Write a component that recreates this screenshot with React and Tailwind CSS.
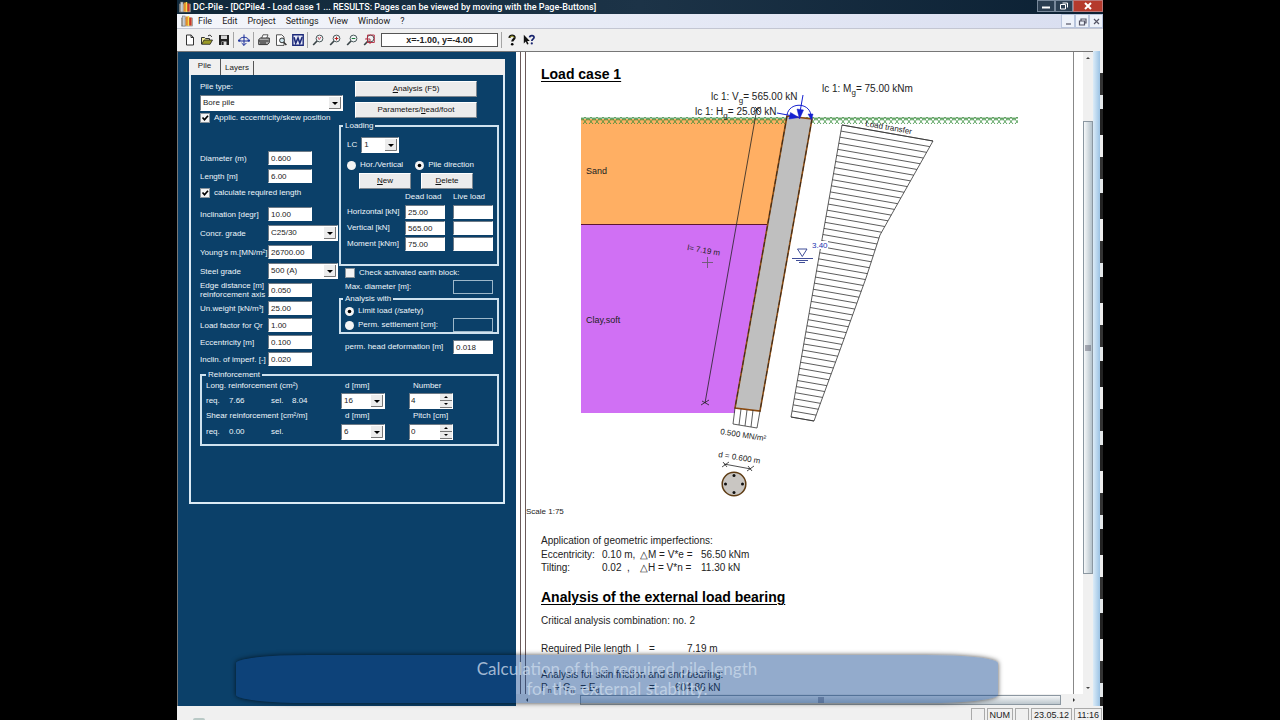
import React, { useId } from "react";

const field =
  "h-3.5 min-w-0 rounded-none border border-t-[#6d7a86] border-l-[#6d7a86] border-r-white border-b-white bg-white px-0.5 text-[8px] leading-3 text-[#222] outline-none";
const push =
  "h-4 border border-t-white border-l-white border-r-[#7d8790] border-b-[#7d8790] bg-[#ececec] text-[8px] leading-3 text-[#111] whitespace-nowrap";

function Combo({ value, className, id, label }) {
  return (
    <span className={"relative inline-flex shrink-0 h-4 " + className}>
      <select
        id={id}
        aria-label={label}
        defaultValue={value}
        className="h-4 w-full appearance-none rounded-none border border-t-[#6d7a86] border-l-[#6d7a86] border-r-white border-b-white bg-white pl-0.5 text-[8px] leading-3 text-[#222] outline-none"
      >
        <option>{value}</option>
      </select>
      <svg viewBox="0 0 12 12" className="pointer-events-none absolute right-0.5 top-0.5 size-3">
        <rect width="12" height="12" fill="#ececec" />
        <path d="M11.5 0v11.5H0" fill="none" stroke="#777" />
        <path d="M3 5h6L6 8z" fill="#000" />
      </svg>
    </span>
  );
}

function Spin({ value, label, id }) {
  return (
    <span className="flex h-4 w-11 border border-t-[#6d7a86] border-l-[#6d7a86] border-r-white border-b-white bg-white">
      <input id={id} aria-label={label} defaultValue={value} className="w-7 min-w-0 grow bg-white px-px text-[8px] text-[#222] outline-none" />
      <span className="flex w-3 flex-col">
        <button aria-label="Increase" className="flex h-[7px] items-center justify-center border-b border-[#777] bg-[#ececec]">
          <svg viewBox="0 0 6 4" className="h-1 w-1.5"><path d="M1 3h4L3 1z" /></svg>
        </button>
        <button aria-label="Decrease" className="flex h-[7px] items-center justify-center border-b border-[#777] bg-[#ececec]">
          <svg viewBox="0 0 6 4" className="h-1 w-1.5"><path d="M1 1h4L3 3z" /></svg>
        </button>
      </span>
    </span>
  );
}

function Row({ label, value, combo, h }) {
  const id = useId();
  return (
    <div className={"flex items-center " + h}>
      <label htmlFor={id} className="w-[68px] shrink-0 leading-[9px]">{label}</label>
      {combo ? <Combo id={id} value={value} className="w-[70px]" /> : <input id={id} defaultValue={value} className={field + " w-11"} />}
    </div>
  );
}

function Check({ label, on, h }) {
  return (
    <label className={"flex items-center gap-1 " + h}>
      <span className="relative flex size-[10px] shrink-0">
        <input type="checkbox" defaultChecked={on} className="peer size-[10px] appearance-none border border-[#8a949c] bg-[#f4f4f4]" />
        <svg viewBox="0 0 10 10" className="pointer-events-none absolute inset-0 hidden size-[10px] peer-checked:block">
          <path d="M2.5 4.5l2 2.2 3.5-4" fill="none" stroke="#000" strokeWidth="1.7" />
        </svg>
      </span>
      {label}
    </label>
  );
}

function Radio({ name, label, on }) {
  return (
    <label className="flex items-center gap-1">
      <span className="relative flex size-[9px] shrink-0">
        <input type="radio" name={name} defaultChecked={on} className="peer size-[9px] appearance-none rounded-full bg-[#f4f4f4]" />
        <svg viewBox="0 0 9 9" className="pointer-events-none absolute inset-0 hidden size-[9px] peer-checked:block">
          <circle cx="4.5" cy="4.5" r="1.8" />
        </svg>
      </span>
      {label}
    </label>
  );
}

function AppIcon() {
  return (
    <svg viewBox="0 0 12 12" className="size-3 shrink-0">
      <rect x="0.5" y="3" width="11" height="8" fill="#d8cfa4" stroke="#7b7b80" strokeWidth=".6" />
      <rect x="1.5" y="1" width="2.6" height="10" fill="#c9cdd4" stroke="#666" strokeWidth=".5" />
      <rect x="4.7" y="1.5" width="2.8" height="9" fill="#e58a2c" />
      <rect x="8" y="2.5" width="2.6" height="8" fill="#c7382e" />
      <rect x="6.8" y="1" width="1.4" height="10" fill="#f5df4c" />
    </svg>
  );
}

const glass = (
  <>
    <circle cx="7.5" cy="4.5" r="3.4" fill="#eef3f3" stroke="#4c5a5c" />
    <path d="M5 7L1.2 11" stroke="#3b4548" strokeWidth="1.7" />
  </>
);
const icons = {
  New: <path d="M2.5 1h4.6l2.4 2.4V11h-7zM7 1v2.5h2.5" fill="#fff" stroke="#333" />,
  Open: <><path d="M.5 10V3.5h3l1 1h4V6" fill="#f6ef9a" stroke="#333" /><path d="M.7 10.3L3 6h8.5l-2.4 4.3z" fill="#9a9a26" stroke="#222" strokeWidth=".8" /><path d="M7 2c2-1.6 3-.5 3.6.8" fill="none" stroke="#222" /></>,
  Save: <><path d="M1 1h10v10H1z" fill="#222" /><path d="M3 1.5h6V5H3z" fill="#d8d8d8" /><path d="M3.5 7.5h5V11h-5z" fill="#ddd" /><path d="M4 8h1.6v3H4z" fill="#222" /></>,
  "Pile system": <path d="M6 .5v11M3.600 9L6 11.400 8.400 9M1 7C1 2 11 2 11 7M1 7h10M-.2 5.400L1 7.600l1.600-2M9.400 5.600L11 7.600l1.200-2.200" fill="none" stroke="#1b2f9a" />,
  Print: <><path d="M3.5 4.5L5 .8h5L8.6 4.5" fill="#fff" stroke="#333" strokeWidth=".8" /><path d="M.7 5.500L2.500 4h8.800v4.500L9.500 10.600H.7z" fill="#aaa" stroke="#222" strokeWidth=".9" /><path d="M1 7h9.500M2 9h6" stroke="#222" /></>,
  Preview: <><path d="M1.5.8h5.3L9 3v8.400H1.500z" fill="#fff" stroke="#444" strokeWidth=".9" /><circle cx="7" cy="6.400" r="2.400" fill="#cfe6ee" stroke="#333" /><path d="M8.600 8.200l2.800 2.900" stroke="#333" strokeWidth="1.500" /></>,
  "Export to Word": <><path d="M.8.8h10.400v10.400H.8z" fill="#e6e9f6" stroke="#1d2a7a" strokeWidth="1.400" /><path d="M2 3.200l1.700 6L6 4l1.800 5.200L10.200 3" fill="none" stroke="#1d2a7a" strokeWidth="1.600" /></>,
  "Zoom window": <>{glass}<path d="M6 3l1.200 2.600L8.800 3" fill="none" stroke="#c44a5a" strokeWidth=".9" /></>,
  "Zoom in": <>{glass}<path d="M5.700 4.500h3.600M7.500 2.700v3.600" stroke="#b22" /></>,
  "Zoom out": <>{glass}<path d="M5.700 4.500h3.600" stroke="#1a7a3a" /></>,
  "Zoom all": <>{glass}<path d="M4.500 1h6.800v7.500H4.500zM2 5h5v5" fill="none" stroke="#b3263a" strokeWidth=".9" /></>,
  Help: <><path d="M3.600 4C3.400.6 9 .8 8.600 3.800 8.400 5.400 6.300 5.400 6.300 7.600" fill="none" stroke="#111" strokeWidth="2.200" /><path d="M4 3.800C4 1.600 8.200 1.600 8 3.800" fill="none" stroke="#e7e23a" strokeWidth=".7" /><circle cx="6.200" cy="10.200" r="1.300" /></>,
  "Context help": <><path d="M.8.8v8.600l2-1.800 1.300 3 1.500-.6-1.400-3h2.600z" fill="#111" /><path d="M6.600 3.400c.2-2.600 4.800-2.400 4.400.2-.3 1.600-2.200 1.600-2.200 3.400" fill="none" stroke="#17236e" strokeWidth="1.700" /><circle cx="8.800" cy="9.400" r="1.100" fill="#17236e" /></>,
};
function Tool({ name }) {
  return (
    <button aria-label={name} className="flex size-[17px] shrink-0 items-center justify-center">
      <svg viewBox="0 0 12 12" className="size-3">{icons[name]}</svg>
    </button>
  );
}
const Sep = () => <span className="mx-px h-4 w-px shrink-0 bg-[#a5a5a5]" />;

/* Geometry of the load-transfer diagram */
const right = [[933, 141], [880, 235], [866, 278], [840, 350], [826, 388], [814, 421]];
const rungs = Array.from({ length: 49 }, (_, i) => {
  const t = i / 48;
  const x = 842 - 51 * t;
  const y = 125 + 292 * t;
  const k = 0.175;
  for (let j = 0; j < right.length - 1; j++) {
    const [ax, ay] = right[j];
    const [bx, by] = right[j + 1];
    const fa = ay - y - k * (ax - x);
    const fb = by - y - k * (bx - x);
    if (fa <= 0.5 && fb >= -0.5) {
      const s = Math.min(1, Math.max(0, fa / (fa - fb)));
      return [x, y, ax + (bx - ax) * s, ay + (by - ay) * s];
    }
  }
  return [x, y, 814, 421];
});

function Figure() {
  return (
    <svg viewBox="526 82 546 436" width="546" height="436" className="shrink-0" fontFamily="Liberation Sans, Arial, sans-serif" fill="#222">
      <defs>
        <pattern id="grass" width="6" height="7" patternUnits="userSpaceOnUse" y="117">
          <path d="M0 1l5 6M3 0l3 3.500M6 1L1 7M3 0L0 3.500" fill="none" stroke="#2f8a35" strokeWidth=".8" />
        </pattern>
      </defs>
      <path d="M581 119H787L768 224H581z" fill="#ffaf63" />
      <path d="M581 224H768L735 408V413H581z" fill="#d070f4" />
      <path d="M581 224.500H768" stroke="#5c1630" />
      <rect x="581" y="117" width="437" height="7" fill="url(#grass)" />
      <path d="M581 118H1018" stroke="#5a9a5a" strokeWidth=".8" />
      <path d="M787 116L812 119 760 411 735 408z" fill="#bfbfbf" stroke="#8a4a10" strokeWidth="1.600" />
      <path d="M787 116L735 408M812 119L760 411" fill="none" stroke="#222" strokeWidth=".8" strokeDasharray="5 3" />
      <path d="M735 408L733 424 757 428 760 411M741 409l-2 16M747 410l-2 16M753 410l-2 17" fill="none" stroke="#333" strokeWidth=".8" />
      <path d="M757 108L705 403M753 112l8-5M755 107l5 5M701 405l8-5M702 401l7 4" stroke="#222" strokeWidth=".8" />
      <path d="M707.500 257v11M702 262.500h11" stroke="#6b5a70" strokeWidth=".9" />
      <g fill="none" stroke="#333" strokeWidth=".8">
        <path d="M791 417L842 125 933 141 880 235 866 278 840 350 826 388 814 421z" />
        {rungs.map(([a, b, c, d], i) => <path key={i} d={`M${a} ${b}L${c} ${d}`} />)}
      </g>
      <g stroke="#1420d0" strokeWidth="1" fill="none">
        <path d="M787 115C789 102 809 102 811 115M803 95L800 112M777 113L793 116" />
        <path d="M799.500 119L797 109l6.500 1zM799 117.500L789 119l1.500-6.500zM811.500 120l-3.500-6h5z" fill="#1420d0" strokeWidth=".5" />
      </g>
      <path d="M797.500 249h9.500l-4.700 7.500zM792 258.500h21M796 260.500h12M799 262.500h6" fill="none" stroke="#2a3a8c" strokeWidth=".9" />
      <rect x="811" y="241" width="17" height="8" fill="#fff" />
      <text x="812" y="248" fontSize="8" fill="#2233b0">3.40</text>
      <g fontSize="10">
        <text x="822" y="92">lc 1: M<tspan dy="3" fontSize="8">g</tspan><tspan dy="-3">= 75.00 kNm</tspan></text>
        <text x="711" y="100">lc 1: V<tspan dy="3" fontSize="8">g</tspan><tspan dy="-3">= 565.00 kN</tspan></text>
        <text x="695" y="115">lc 1: H<tspan dy="3" fontSize="8">g</tspan><tspan dy="-3">= 25.00 kN</tspan></text>
      </g>
      <text x="586" y="174" fontSize="9">Sand</text>
      <text x="586" y="323" fontSize="9">Clay,soft</text>
      <g fontSize="8">
        <text transform="translate(865 126) rotate(10)">Load transfer</text>
        <text transform="translate(687 250) rotate(10)">l= 7.19 m</text>
        <text transform="translate(720 434) rotate(9)">0.500 MN/m²</text>
        <text transform="translate(718 457) rotate(9)">d = 0.600 m</text>
        <text x="526" y="514">Scale 1:75</text>
      </g>
      <path d="M724 464L751 469M722 467l7-5M723 462l4 5M747 471l7-5M748 466l4 5" stroke="#222" strokeWidth=".8" />
      <circle cx="734" cy="484" r="11.800" fill="#c9c6c2" stroke="#5e3c14" strokeWidth="1.500" />
      <g fill="#111"><circle cx="734" cy="475.500" r="1.500" /><circle cx="734" cy="492.500" r="1.500" /><circle cx="725.500" cy="484" r="1.500" /><circle cx="742.500" cy="484" r="1.500" /></g>
    </svg>
  );
}

function LoadRow({ label, dead }) {
  return (
    <>
      <span>{label}</span>
      <input aria-label={label + " dead load"} defaultValue={dead} className={field + " w-10"} />
      <input aria-label={label + " live load"} className={field + " w-10"} />
    </>
  );
}

function PilePanel() {
  return (
    <aside className="w-[338px] shrink-0 bg-[#0b4069] px-[11px] pt-[7px] text-[8px] leading-3 whitespace-nowrap text-[#eef6fb]">
      <div className="flex h-4 items-end bg-[#f0f0f0] text-[#222]" role="tablist">
        <button role="tab" aria-selected="true" className="h-4 w-8 border-r border-[#555] pb-0.5">Pile</button>
        <button role="tab" aria-selected="false" className="h-3.5 border-r border-[#555] px-1">Layers</button>
      </div>
      <div className="border-2 border-t-0 border-[#dcebf5] pt-1.5 pr-1 pb-14 pl-[9px]">
        <div className="grid grid-cols-[138px_160px] gap-x-px">
          <div>
            <label htmlFor="ptype" className="block h-3.5">Pile type:</label>
            <Combo id="ptype" value="Bore pile" className="w-[143px] align-top" />
            <Check label="Applic. eccentricity/skew position" on h="h-3.5" />
            <div className="h-6" />
            <Row label="Diameter (m)" value="0.600" h="h-[18px]" />
            <Row label="Length [m]" value="6.00" h="h-[18px]" />
            <Check label="calculate required length" on h="h-4" />
            <div className="h-1" />
            <Row label="Inclination [degr]" value="10.00" h="h-[18px]" />
            <Row label="Concr. grade" value="C25/30" combo h="h-5" />
            <Row label="Young's m.[MN/m²]" value="26700.00" h="h-[18px]" />
            <Row label="Steel grade" value="500 (A)" combo h="h-5" />
            <Row label={<>Edge distance [m]<br />reinforcement axis</>} value="0.050" h="h-[18px]" />
            <Row label="Un.weight [kN/m³]" value="25.00" h="h-[18px]" />
            <Row label="Load factor for Qr" value="1.00" h="h-4" />
            <Row label="Eccentricity [m]" value="0.100" h="h-[18px]" />
            <Row label="Inclin. of imperf. [-]" value="0.020" h="h-4" />
          </div>
          <div>
            <div className="flex flex-col gap-[5px] pl-4">
              <button className={push + " w-[122px]"}><u>A</u>nalysis (F5)</button>
              <button className={push + " w-[122px]"}>Parameters/<u>h</u>ead/foot</button>
            </div>
            <fieldset className="mt-[3px] min-w-0 border-2 border-[#cfe2ef] px-1.5 pb-3">
              <legend className="-ml-1 px-0.5 leading-[10px]">Loading</legend>
              <div className="mt-1.5 flex items-center gap-1">
                <label htmlFor="lc">LC</label>
                <Combo id="lc" value="1" className="w-[38px]" />
              </div>
              <div className="mt-1 flex h-4 items-center gap-3">
                <Radio name="dir" label="Hor./Vertical" />
                <Radio name="dir" label="Pile direction" on />
              </div>
              <div className="flex gap-2.5 pl-3">
                <button className={push + " w-[52px]"}><u>N</u>ew</button>
                <button className={push + " w-[52px]"}><u>D</u>elete</button>
              </div>
              <div className="mt-px grid auto-rows-[16px] grid-cols-[58px_48px_40px] grid-rows-[14px] items-center">
                <span />
                <span>Dead load</span>
                <span>Live load</span>
                <LoadRow label="Horizontal [kN]" dead="25.00" />
                <LoadRow label="Vertical [kN]" dead="565.00" />
                <LoadRow label="Moment [kNm]" dead="75.00" />
              </div>
            </fieldset>
            <div className="px-1.5">
              <Check label="Check activated earth block:" h="h-3.5" />
              <div className="flex h-3.5 items-center justify-between">
                <label htmlFor="maxd">Max. diameter [m]:</label>
                <input id="maxd" disabled className="h-3.5 w-10 border border-[#9db8ca] bg-[#0b4069]" />
              </div>
            </div>
            <fieldset className="min-w-0 border-2 border-[#cfe2ef] px-1">
              <legend className="-ml-0.5 px-0.5 leading-[10px]">Analysis with</legend>
              <div className="flex h-3.5 items-center"><Radio name="mode" label="Limit load (/safety)" on /></div>
              <div className="flex h-3.5 items-center justify-between">
                <Radio name="mode" label="Perm. settlement [cm]:" />
                <input aria-label="Permissible settlement" disabled className="h-3.5 w-10 border border-[#9db8ca] bg-[#0b4069]" />
              </div>
            </fieldset>
            <div className="mt-1.5 flex items-center justify-between px-1.5">
              <label htmlFor="phd">perm. head deformation [m]</label>
              <input id="phd" defaultValue="0.018" className={field + " w-10"} />
            </div>
          </div>
        </div>
        <fieldset className="mt-[3px] min-w-0 border-2 border-[#cfe2ef] px-1 pb-1">
          <legend className="px-0.5 leading-[10px]">Reinforcement</legend>
          <div className="grid grid-cols-[23px_42px_21px_49px_68px_44px] grid-rows-[12px_17px_14px_17px] items-center">
            <span className="col-span-4">Long. reinforcement (cm²)</span>
            <label htmlFor="d1" className="pl-1">d [mm]</label>
            <label htmlFor="num" className="pl-1">Number</label>
            <span>req.</span><span>7.66</span><span>sel.</span><span>8.04</span>
            <Combo id="d1" value="16" className="w-11" />
            <Spin id="num" value="4" />
            <span className="col-span-4">Shear reinforcement [cm²/m]</span>
            <label htmlFor="d2" className="pl-1">d [mm]</label>
            <label htmlFor="pitch" className="pl-1">Pitch [cm]</label>
            <span>req.</span><span>0.00</span><span>sel.</span><span />
            <Combo id="d2" value="6" className="w-11" />
            <Spin id="pitch" value="0" />
          </div>
        </fieldset>
      </div>
    </aside>
  );
}

function Report() {
  return (
    <article className="min-w-0 grow overflow-hidden border-r border-l border-[#6b5a5a] border-r-[#888] bg-white text-[10px] leading-[14px] text-[#222] whitespace-pre">
      <h2 className="h-[30px] pt-3 pl-[15px] text-[14px] leading-5 font-bold text-black underline underline-offset-2">Load case 1</h2>
      <Figure />
      <div className="pt-4 pl-[15px]">
        <p>Application of geometric imperfections:</p>
        <div className="grid grid-cols-[61px_38px_61px_1fr] leading-[13px]">
          <span>Eccentricity:</span><span>0.10 m,</span><span>△M = V*e =</span><span>56.50 kNm</span>
          <span>Tilting:</span><span>0.02  ,</span><span>△H = V*n =</span><span>11.30 kN</span>
        </div>
        <h2 className="mt-[13px] text-[14px] leading-5 font-bold text-black underline underline-offset-2">Analysis of the external load bearing</h2>
        <p className="mt-[7px]">Critical analysis combination: no. 2</p>
        <div className="mt-3.5 grid grid-cols-[108px_38px_1fr]"><span>Required Pile length  l</span><span>=</span><span>7.19 m</span></div>
        <p className="mt-3 leading-[13px]">Analysis for skin friction and end bearing:</p>
        <div className="grid grid-cols-[108px_26px_1fr] leading-[13px]">
          <span>P<sub className="text-[7px]">n</sub> + G<sub className="text-[7px]">n</sub>  = E<sub className="text-[7px]">d</sub></span><span>=</span><span>604.86 kN</span>
        </div>
      </div>
    </article>
  );
}

export default function App() {
  return (
    <div className="flex h-screen overflow-hidden bg-black px-[177px] font-['Liberation_Sans',Arial,sans-serif]">
      <div className="relative flex min-w-0 grow flex-col bg-[#f0f0f0]">
        <header className="flex h-3.5 shrink-0 items-center bg-linear-to-r from-[#10283a] via-[#1c3347] to-[#0b2033] pl-0.5">
          <AppIcon />
          <h1 className="grow pl-0.5 font-[Roboto,sans-serif] text-[9px] leading-3.5 font-medium whitespace-nowrap text-white">
            DC-Pile - [DCPile4 - Load case 1 ... RESULTS: Pages can be viewed by moving with the Page-Buttons]
          </h1>
          <div className="flex h-3 self-start">
            <button aria-label="Minimize" className="flex w-[18px] items-center justify-center border border-[#78889a] bg-[#2c3f52]">
              <svg viewBox="0 0 10 8" className="h-2 w-2.5"><path d="M1 4.500h8v2H1z" fill="#fff" /></svg>
            </button>
            <button aria-label="Restore" className="flex w-[18px] items-center justify-center border border-[#78889a] bg-[#2c3f52]">
              <svg viewBox="0 0 10 8" className="h-2 w-2.5" fill="none" stroke="#fff"><path d="M3.500 1h5v4.500M1.500 2.500h5v4.500h-5z" /></svg>
            </button>
            <button aria-label="Close" className="flex w-[30px] items-center justify-center border border-[#b77] bg-[#b53a2c]">
              <svg viewBox="0 0 10 8" className="h-2 w-2.5"><path d="M2 1l6 6M8 1L2 7" stroke="#fff" strokeWidth="2" /></svg>
            </button>
          </div>
        </header>
        <nav className="flex h-[15px] shrink-0 items-center border-b border-[#c3c6d2] bg-linear-to-r from-[#f4f6fb] to-[#d9def0] pl-1 font-[Roboto,sans-serif] text-[9px] leading-3 text-[#222]">
          <AppIcon />
          <div className="flex grow gap-2.5 pl-[5px]">
            {["File", "Edit", "Project", "Settings", "View", "Window", "?"].map((m) => <button key={m}>{m}</button>)}
          </div>
          <div className="flex">
            {["M3 8h5", "M4 5V3h5v4H8M2.500 5h5v4h-5z", "M3 3l5 5M8 3L3 8"].map((d, i) => (
              <button key={d} aria-label={["Minimize page", "Restore page", "Close page"][i]} className="flex size-3.5 items-center justify-center border border-[#b8c4dc] bg-[#eef2fa]">
                <svg viewBox="0 0 11 11" className="size-[11px]"><path d={d} fill="none" stroke="#556" strokeWidth="1.200" /></svg>
              </button>
            ))}
          </div>
        </nav>
        <div className="flex h-[22px] shrink-0 items-center pl-1">
          <Tool name="New" /><Tool name="Open" /><Tool name="Save" /><Sep />
          <Tool name="Pile system" /><Sep />
          <Tool name="Print" /><Tool name="Preview" /><Tool name="Export to Word" /><Sep />
          <Tool name="Zoom window" /><Tool name="Zoom in" /><Tool name="Zoom out" /><Tool name="Zoom all" />
          <input aria-label="Coordinates" readOnly value="x=-1.00, y=-4.00" className="mr-0.5 ml-1 h-3.5 w-[117px] border border-[#555] bg-white text-center text-[9px] font-bold text-[#222]" />
          <Sep /><Tool name="Help" /><Tool name="Context help" />
        </div>
        <div className="flex min-h-0 grow">
          <div className="flex min-w-0 grow border-t border-l border-[#777]">
            <PilePanel />
            <main className="flex min-w-0 grow flex-col bg-white">
              <div className="flex min-h-0 grow">
                <div className="ml-1 w-[5px] shrink-0 border-l border-[#6b5a5a]" />
                <Report />
                <div className="ml-[9px] flex w-2.5 shrink-0 flex-col items-center bg-[#f0f0f0]">
                  <svg viewBox="0 0 10 12" className="h-3 w-2.5"><path d="M3 7h4L5 5z" fill="#444" /></svg>
                  <div className="h-[57px]" />
                  <div className="flex min-h-0 w-2.5 grow-3 basis-0 items-center justify-center border border-[#8b97a1] bg-linear-to-r from-[#f6f8f9] to-[#b4c2cb]">
                    <svg viewBox="0 0 6 6" className="size-1.5"><path d="M0 1h6M0 3h6M0 5h6" stroke="#556" strokeWidth=".9" /></svg>
                  </div>
                  <div className="h-[108px]" />
                  <svg viewBox="0 0 10 12" className="h-3 w-2.5"><path d="M3 5h4L5 7z" fill="#444" /></svg>
                </div>
              </div>
              <div className="flex h-3 shrink-0 items-center bg-[#f0f0f0] pl-1.5">
                <svg viewBox="0 0 10 10" className="size-2.5"><path d="M6 3v4L4 5z" fill="#333" /></svg>
                <div className="ml-12 flex h-2.5 grow items-center justify-center border border-[#8b97a1] bg-linear-to-b from-[#f4f6f7] to-[#bcc6cd]">
                  <svg viewBox="0 0 6 6" className="size-1.5"><path d="M1 0v6M3 0v6M5 0v6" stroke="#556" strokeWidth=".9" /></svg>
                </div>
                <svg viewBox="0 0 10 10" className="mr-3.5 ml-2 size-2.5"><path d="M4 3v4l2-2z" fill="#333" /></svg>
              </div>
            </main>
          </div>
          <div className="w-[7px] shrink-0 bg-linear-to-r from-[#dcecf8] to-[#9cc3e4]" />
          <div className="w-[3px] shrink-0 bg-[repeating-linear-gradient(180deg,#eee_0_22px,#333_22px_44px,#e4e8ea_44px_58px,#222_58px_84px)]" />
        </div>
        <footer className="flex h-3.5 shrink-0 items-end gap-0.5 pr-px pl-4 text-[9px] leading-3 text-[#222]">
          <span className="mr-auto h-0.5 w-3 rounded-t-full bg-[#b9c9c6]" />
          {["", "NUM", "", "23.05.12", "11:16"].map((t, i) => (
            <span key={i} className="h-3 min-w-3.5 border border-b-0 border-[#aaa] px-0.5">{t}</span>
          ))}
        </footer>
        <div className="absolute right-[105px] bottom-[17px] left-[59px] flex h-12 flex-col items-center justify-center rounded-[72px/8px] bg-[#10448d]/45 text-center font-[Lato,sans-serif] text-[17px] leading-5 text-[#c9d9ea]/80 shadow-[0_0_5px_rgba(0,0,0,0.7)]">
          <p>Calculation of the required pile length</p>
          <p>for the external stability.</p>
        </div>
      </div>
    </div>
  );
}
